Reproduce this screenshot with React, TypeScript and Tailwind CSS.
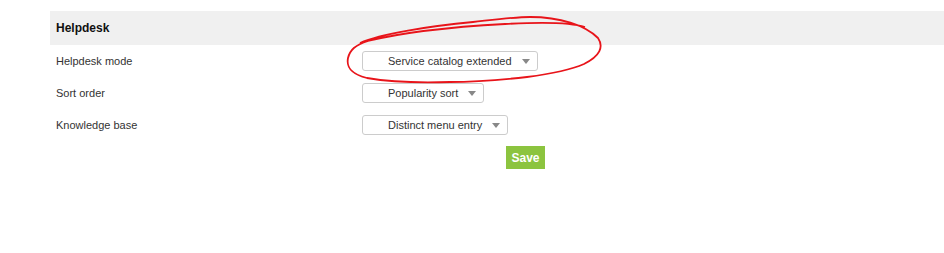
import React from "react";

const rows = [
  { label: "Helpdesk mode", value: "Service catalog extended", w: "w-[176px]" },
  { label: "Sort order", value: "Popularity sort", w: "w-[122px]" },
  { label: "Knowledge base", value: "Distinct menu entry", w: "w-[146px]" },
];

export default function App() {
  return (
    <div className="relative w-[944px] h-[253px] bg-white" style={{ fontFamily: "Arial, 'Liberation Sans', sans-serif" }}>
      <div className="pl-[50px] pt-[11px]">
        <div className="h-[34px] bg-[#f0f0f0] flex items-center pl-[6px]">
          <span className="text-[12px] font-bold text-[#111]">Helpdesk</span>
        </div>
        <div className="flex flex-col">
          {rows.map((r) => (
            <div key={r.label} className="h-[32px] flex items-center pl-[6px]">
              <div className="w-[306px] text-[11px] text-[#333]">{r.label}</div>
              <div className={`${r.w} h-[20px] border border-[#cccccc] rounded-[3px] flex items-center justify-between pl-[25px] pr-[7px] bg-white`}>
                <span className="text-[11px] text-[#333] whitespace-nowrap">{r.value}</span>
                <span className="w-0 h-0 border-l-[4px] border-r-[4px] border-t-[5px] border-l-transparent border-r-transparent border-t-[#888]" />
              </div>
            </div>
          ))}
        </div>
        <div className="pl-[456px] mt-[5px]">
          <button className="w-[39px] h-[23px] bg-[#8cc43f] text-white text-[12px] font-bold flex items-center justify-center">Save</button>
        </div>
      </div>
      <svg className="absolute left-0 top-0 pointer-events-none" width="944" height="253">
        <path
          d="M360 43 C 380 34, 430 26, 473 22 C 500 19, 515 17, 530 17 C 560 17, 585 25, 598 38 C 604 47, 600 56, 584 64 C 568 71, 550 74, 527 77 C 500 80, 480 82, 450 82 C 420 83, 390 82, 367 78 C 352 74, 346 68, 348 58 C 350 50, 355 45, 368 41 C 400 33, 450 27, 505 24 C 540 22, 570 22, 585 27"
          fill="none"
          stroke="#e8141a"
          strokeWidth="1.8"
        />
      </svg>
    </div>
  );
}
